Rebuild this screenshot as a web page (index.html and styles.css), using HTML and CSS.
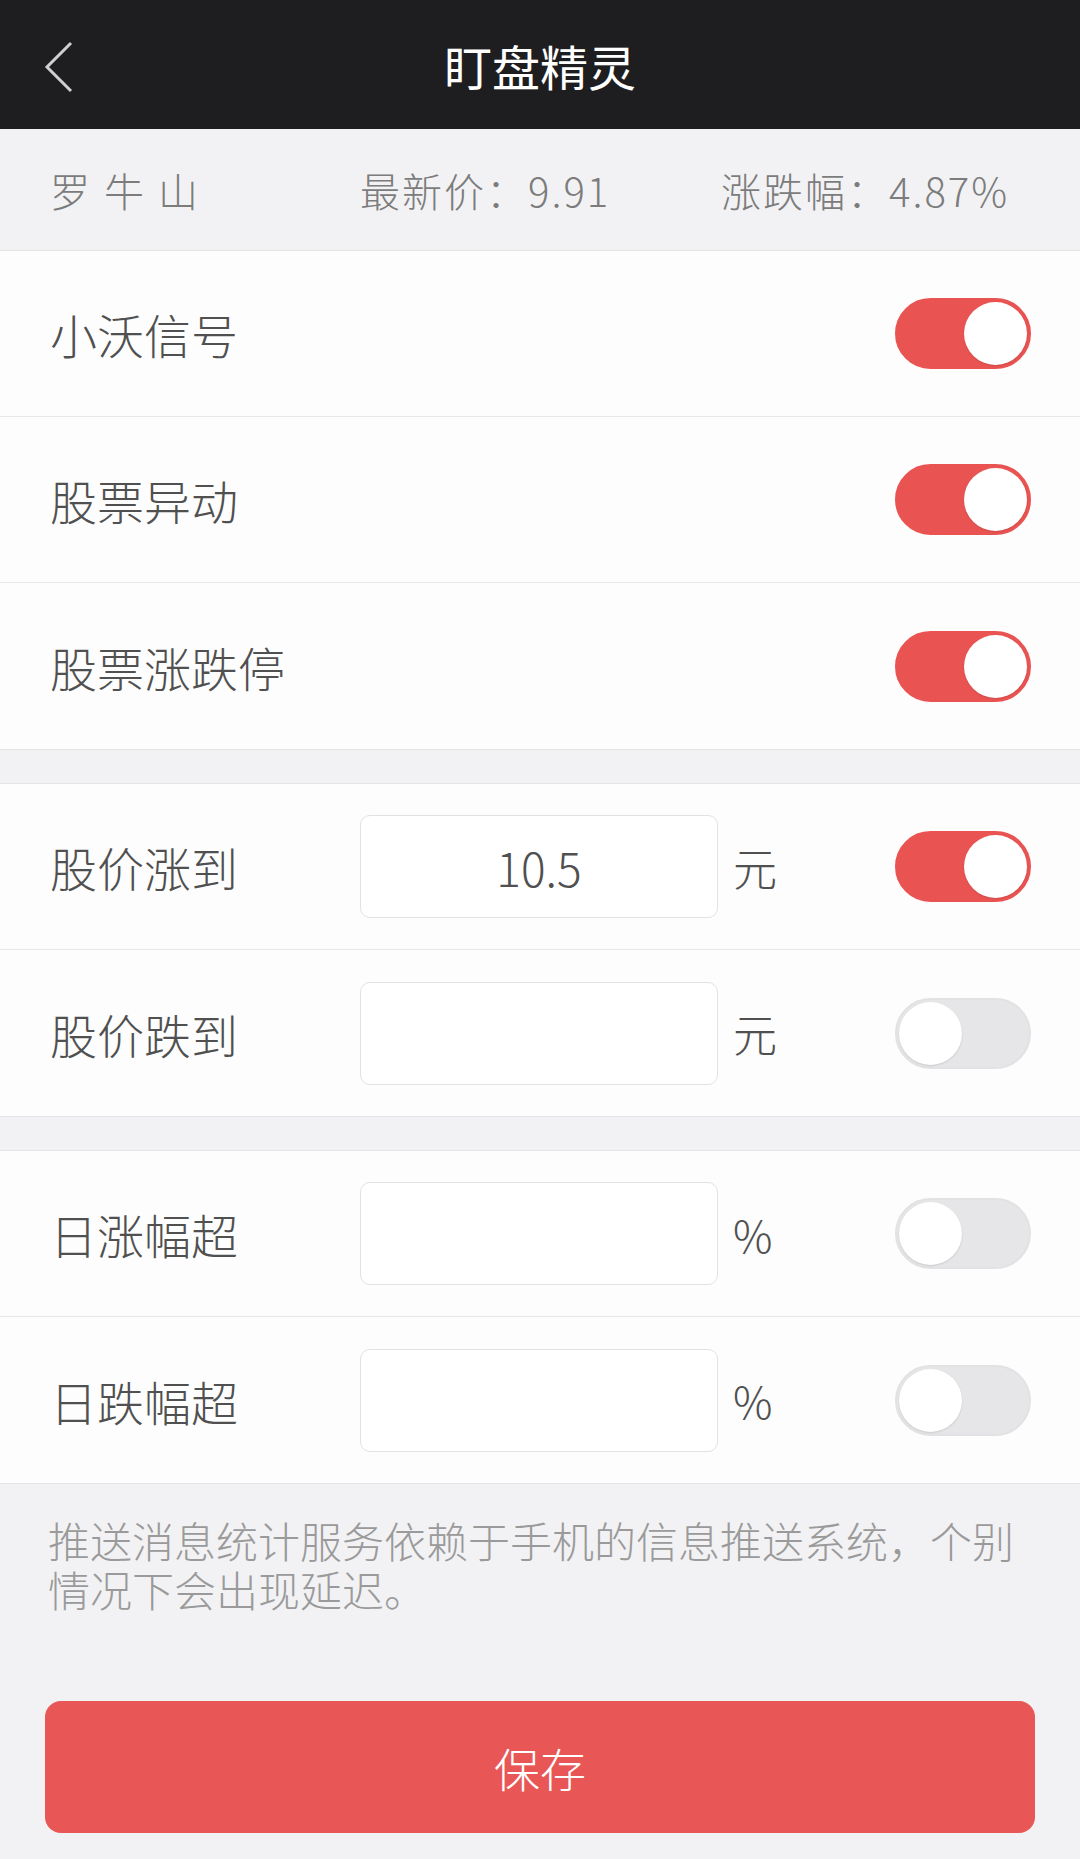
FILE: index.html
```html
<!DOCTYPE html>
<html lang="zh-CN">
<head>
    <meta charset="UTF-8">
    <meta name="viewport" content="width=device-width, initial-scale=1.0">
    <title>盯盘精灵</title>
    <link rel="stylesheet" href="styles.css">
</head>
<body>
    <div class="header">
        <div class="back">
            <svg width="30" height="52" viewBox="0 0 30 52">
                <polyline points="27,2 3,26 27,50" fill="none" stroke="#d0d0d0" stroke-width="3"/>
            </svg>
        </div>
        <h1>盯盘精灵</h1>
        <div></div>
    </div>

    <div class="info">
        <span class="name">罗牛山</span>
        <span>最新价：9.91</span>
        <span>涨跌幅：4.87%</span>
    </div>

    <div class="section">
        <div class="row">
            <span class="label">小沃信号</span>
            <span class="switch on"><i></i></span>
        </div>
        <div class="row">
            <span class="label">股票异动</span>
            <span class="switch on"><i></i></span>
        </div>
        <div class="row">
            <span class="label">股票涨跌停</span>
            <span class="switch on"><i></i></span>
        </div>
    </div>

    <div class="gap"></div>

    <div class="section">
        <div class="row">
            <span class="label">股价涨到</span>
            <input class="box" type="text" value="10.5">
            <span class="unit">元</span>
            <span class="switch on"><i></i></span>
        </div>
        <div class="row">
            <span class="label">股价跌到</span>
            <input class="box" type="text" value="">
            <span class="unit">元</span>
            <span class="switch"><i></i></span>
        </div>
    </div>

    <div class="gap"></div>

    <div class="section">
        <div class="row">
            <span class="label">日涨幅超</span>
            <input class="box" type="text" value="">
            <span class="unit">%</span>
            <span class="switch"><i></i></span>
        </div>
        <div class="row">
            <span class="label">日跌幅超</span>
            <input class="box" type="text" value="">
            <span class="unit">%</span>
            <span class="switch"><i></i></span>
        </div>
    </div>

    <div class="bottom">
        <p class="note">推送消息统计服务依赖于手机的信息推送系统，个别情况下会出现延迟。</p>
        <button class="save">保存</button>
    </div>
</body>
</html>
```

FILE: styles.css
```css
body {
    font-family: "Noto Sans CJK SC", "Noto Sans", sans-serif;
    font-weight: 300;
    margin: 0;
    background: #f2f2f4;
    width: 1080px;
}

.header {
    height: 129px;
    background: #1e1e20;
    display: grid;
    grid-template-columns: 150px 1fr 150px;
    align-items: center;
}

.back {
    padding-left: 44px;
    padding-top: 4px;
    display: flex;
}

.header h1 {
    margin: 0;
    text-align: center;
    color: #fff;
    font-size: 48px;
    font-weight: normal;
}

.info {
    height: 122px;
    display: grid;
    grid-template-columns: 310px 361px 1fr;
    align-items: center;
    padding-left: 50px;
    font-size: 40px;
    letter-spacing: 2px;
    color: #7c7c7c;
    border-bottom: 1px solid #e4e4e6;
    box-sizing: border-box;
}

.info .name {
    letter-spacing: 14px;
}

.section {
    background: #fdfdfd;
    border-bottom: 1px solid #e4e4e6;
}

.row {
    height: 166px;
    display: flex;
    align-items: center;
    padding: 0 49px 0 50px;
    border-bottom: 1px solid #e8e8ea;
    box-sizing: border-box;
}

.row:last-child {
    border-bottom: none;
}

.label {
    width: 310px;
    font-size: 47px;
    color: #505050;
}

.box {
    width: 358px;
    height: 103px;
    box-sizing: border-box;
    border: 1px solid #e2e2e2;
    border-radius: 10px;
    background: #fff;
    font-family: inherit;
    font-weight: 300;
    font-size: 46px;
    color: #505050;
    text-align: center;
    padding: 0;
    outline: none;
}

.unit {
    margin-left: 15px;
    font-size: 44px;
    color: #505050;
}

.switch {
    margin-left: auto;
    width: 136px;
    height: 71px;
    box-sizing: border-box;
    border-radius: 36px;
    background: #e6e6e8;
    border: 2px solid #e2e2e4;
    display: flex;
    align-items: center;
    padding: 2px;
}

.switch i {
    width: 63px;
    height: 63px;
    border-radius: 50%;
    background: #fff;
    box-shadow: 0 1px 2px rgba(0, 0, 0, 0.12);
}

.switch.on {
    background: #e95452;
    border-color: #e95452;
    justify-content: flex-end;
}

.gap {
    height: 33px;
    border-bottom: 1px solid #e4e4e6;
}

.bottom {
    padding: 31px 45px 27px;
}

.note {
    margin: 0 3px 88px;
    font-size: 42px;
    line-height: 49px;
    color: #9a9a9a;
}

.save {
    width: 100%;
    height: 132px;
    border: none;
    border-radius: 16px;
    background: #e85656;
    color: #fff;
    font-family: inherit;
    font-weight: 300;
    font-size: 46px;
}
```
